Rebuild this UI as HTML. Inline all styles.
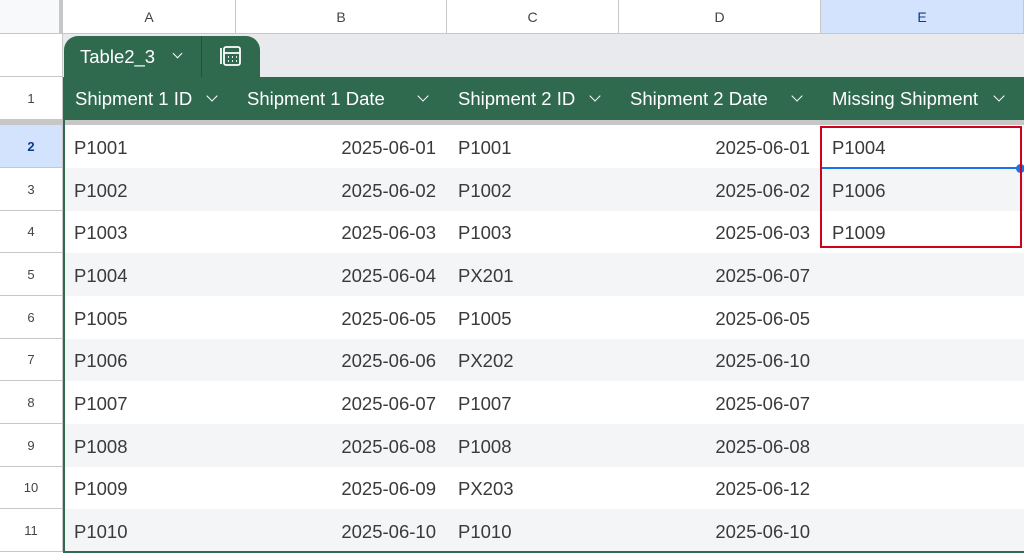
<!DOCTYPE html><html><head><style>
body{margin:0;width:1024px;height:554px;overflow:hidden;background:#fff;font-family:"Liberation Sans",Arial,sans-serif;position:relative}
div{position:absolute;box-sizing:border-box}
.ch{top:0;height:34px;border-right:1px solid #c7c7c7;border-bottom:1px solid #c7c7c7;text-align:center;line-height:34px;font-size:14px;color:#444}
.rh{left:0;width:63px;border-bottom:1px solid #c7c7c7;border-right:1px solid #c7c7c7;text-align:center;font-size:13px;color:#444;background:#fff}
.cell{font-size:18.5px;color:#3a3a3a;padding:0 11px;white-space:nowrap}
.hd{top:77px;height:43px;line-height:43px;font-size:18.5px;color:#fff;padding-left:11px;white-space:nowrap}
.chev{display:inline-block;width:8px;height:8px;border-right:1.8px solid #fff;border-bottom:1.8px solid #fff;transform:rotate(45deg);position:absolute;top:14px}
</style></head><body>
<div style="left:0;top:0;width:63px;height:34px;background:#f8f9fa;border-right:4px solid #c7c7c7;border-bottom:1px solid #c7c7c7"></div>
<div class="ch" style="left:63px;width:173px">A</div>
<div class="ch" style="left:236px;width:211px">B</div>
<div class="ch" style="left:447px;width:172px">C</div>
<div class="ch" style="left:619px;width:202px">D</div>
<div class="ch" style="left:821px;width:203px;background:#d3e3fd;color:#0b3b8c">E</div>
<div style="left:63px;top:34px;width:961px;height:43px;background:#e8eaed"></div>
<div class="rh" style="top:34px;height:43px"></div>
<div style="left:64px;top:36px;width:196px;height:42px;background:#2f6a4f;border-radius:14px 14px 0 0"></div>
<div style="left:201px;top:36px;width:1px;height:41px;background:#24513c"></div>
<div style="left:80px;top:36px;height:41px;line-height:41px;color:#fff;font-size:18.5px">Table2_3</div>
<div class="chev" style="left:174px;top:50px;width:7px;height:7px"></div>
<svg style="position:absolute;left:219px;top:45px" width="24" height="22" viewBox="0 0 24 22" fill="none" stroke="#fff" stroke-width="1.8"><path d="M2 3v16"/><rect x="5" y="2" width="16" height="18" rx="2"/><path d="M5 8h16M9 12h1M13 12h1M17 12h1M9 16h1M13 16h1M17 16h1"/></svg>
<div style="left:63px;top:77px;width:961px;height:43px;background:#2f6a4f"></div>
<div class="rh" style="top:77px;height:43px;line-height:43px">1</div>
<div class="hd" style="left:64px">Shipment 1 ID</div><div class="chev" style="left:208px;top:92px"></div>
<div class="hd" style="left:236px">Shipment 1 Date</div><div class="chev" style="left:419px;top:92px"></div>
<div class="hd" style="left:447px">Shipment 2 ID</div><div class="chev" style="left:591px;top:92px"></div>
<div class="hd" style="left:619px">Shipment 2 Date</div><div class="chev" style="left:793px;top:92px"></div>
<div class="hd" style="left:821px">Missing Shipment</div><div class="chev" style="left:995px;top:92px"></div>
<div style="left:0;top:120px;width:1024px;height:5px;background:#c7c7c7"></div>
<div id="rows"></div>
<script>
var d=[["P1001","2025-06-01","P1001","2025-06-01","P1004"],["P1002","2025-06-02","P1002","2025-06-02","P1006"],["P1003","2025-06-03","P1003","2025-06-03","P1009"],["P1004","2025-06-04","PX201","2025-06-07",""],["P1005","2025-06-05","P1005","2025-06-05",""],["P1006","2025-06-06","PX202","2025-06-10",""],["P1007","2025-06-07","P1007","2025-06-07",""],["P1008","2025-06-08","P1008","2025-06-08",""],["P1009","2025-06-09","PX203","2025-06-12",""],["P1010","2025-06-10","P1010","2025-06-10",""]];
var b=[125,168,211,253,296,339,381,424,467,509,552],h="";
var cols=[[63,173,"l"],[236,211,"r"],[447,172,"l"],[619,202,"r"],[821,203,"l"]];
for(var i=0;i<10;i++){var t=b[i],ht=b[i+1]-t,bg=i%2?"#f4f5f7":"#fff";
h+='<div class="rh" style="top:'+t+'px;height:'+ht+'px;line-height:'+ht+'px;'+(i==0?'background:#d3e3fd;color:#0b3b8c;font-weight:bold':'')+'">'+(i+2)+'</div>';
h+='<div style="left:63px;top:'+t+'px;width:961px;height:'+ht+'px;background:'+bg+'"></div>';
for(var j=0;j<5;j++){var c=cols[j];h+='<div class="cell" style="left:'+c[0]+'px;top:'+t+'px;width:'+c[1]+'px;height:'+ht+'px;line-height:'+(ht+2)+'px;text-align:'+(c[2]=="r"?"right":"left")+'">'+d[i][j]+'</div>';}}
h+='<div style="left:63px;top:120px;width:2px;height:433px;background:#2f6a4f"></div>';
h+='<div style="left:63px;top:551px;width:961px;height:2px;background:#2f6a4f"></div>';
h+='<div style="left:821px;top:167px;width:200px;height:2px;background:#1a73e8"></div>';
h+='<div style="left:1016px;top:164px;width:9px;height:9px;border-radius:50%;background:#1a73e8"></div>';
h+='<div style="left:820px;top:126px;width:202px;height:122px;border:2px solid #d0021b"></div>';
document.getElementById("rows").outerHTML=h;
</script>
</body></html>
